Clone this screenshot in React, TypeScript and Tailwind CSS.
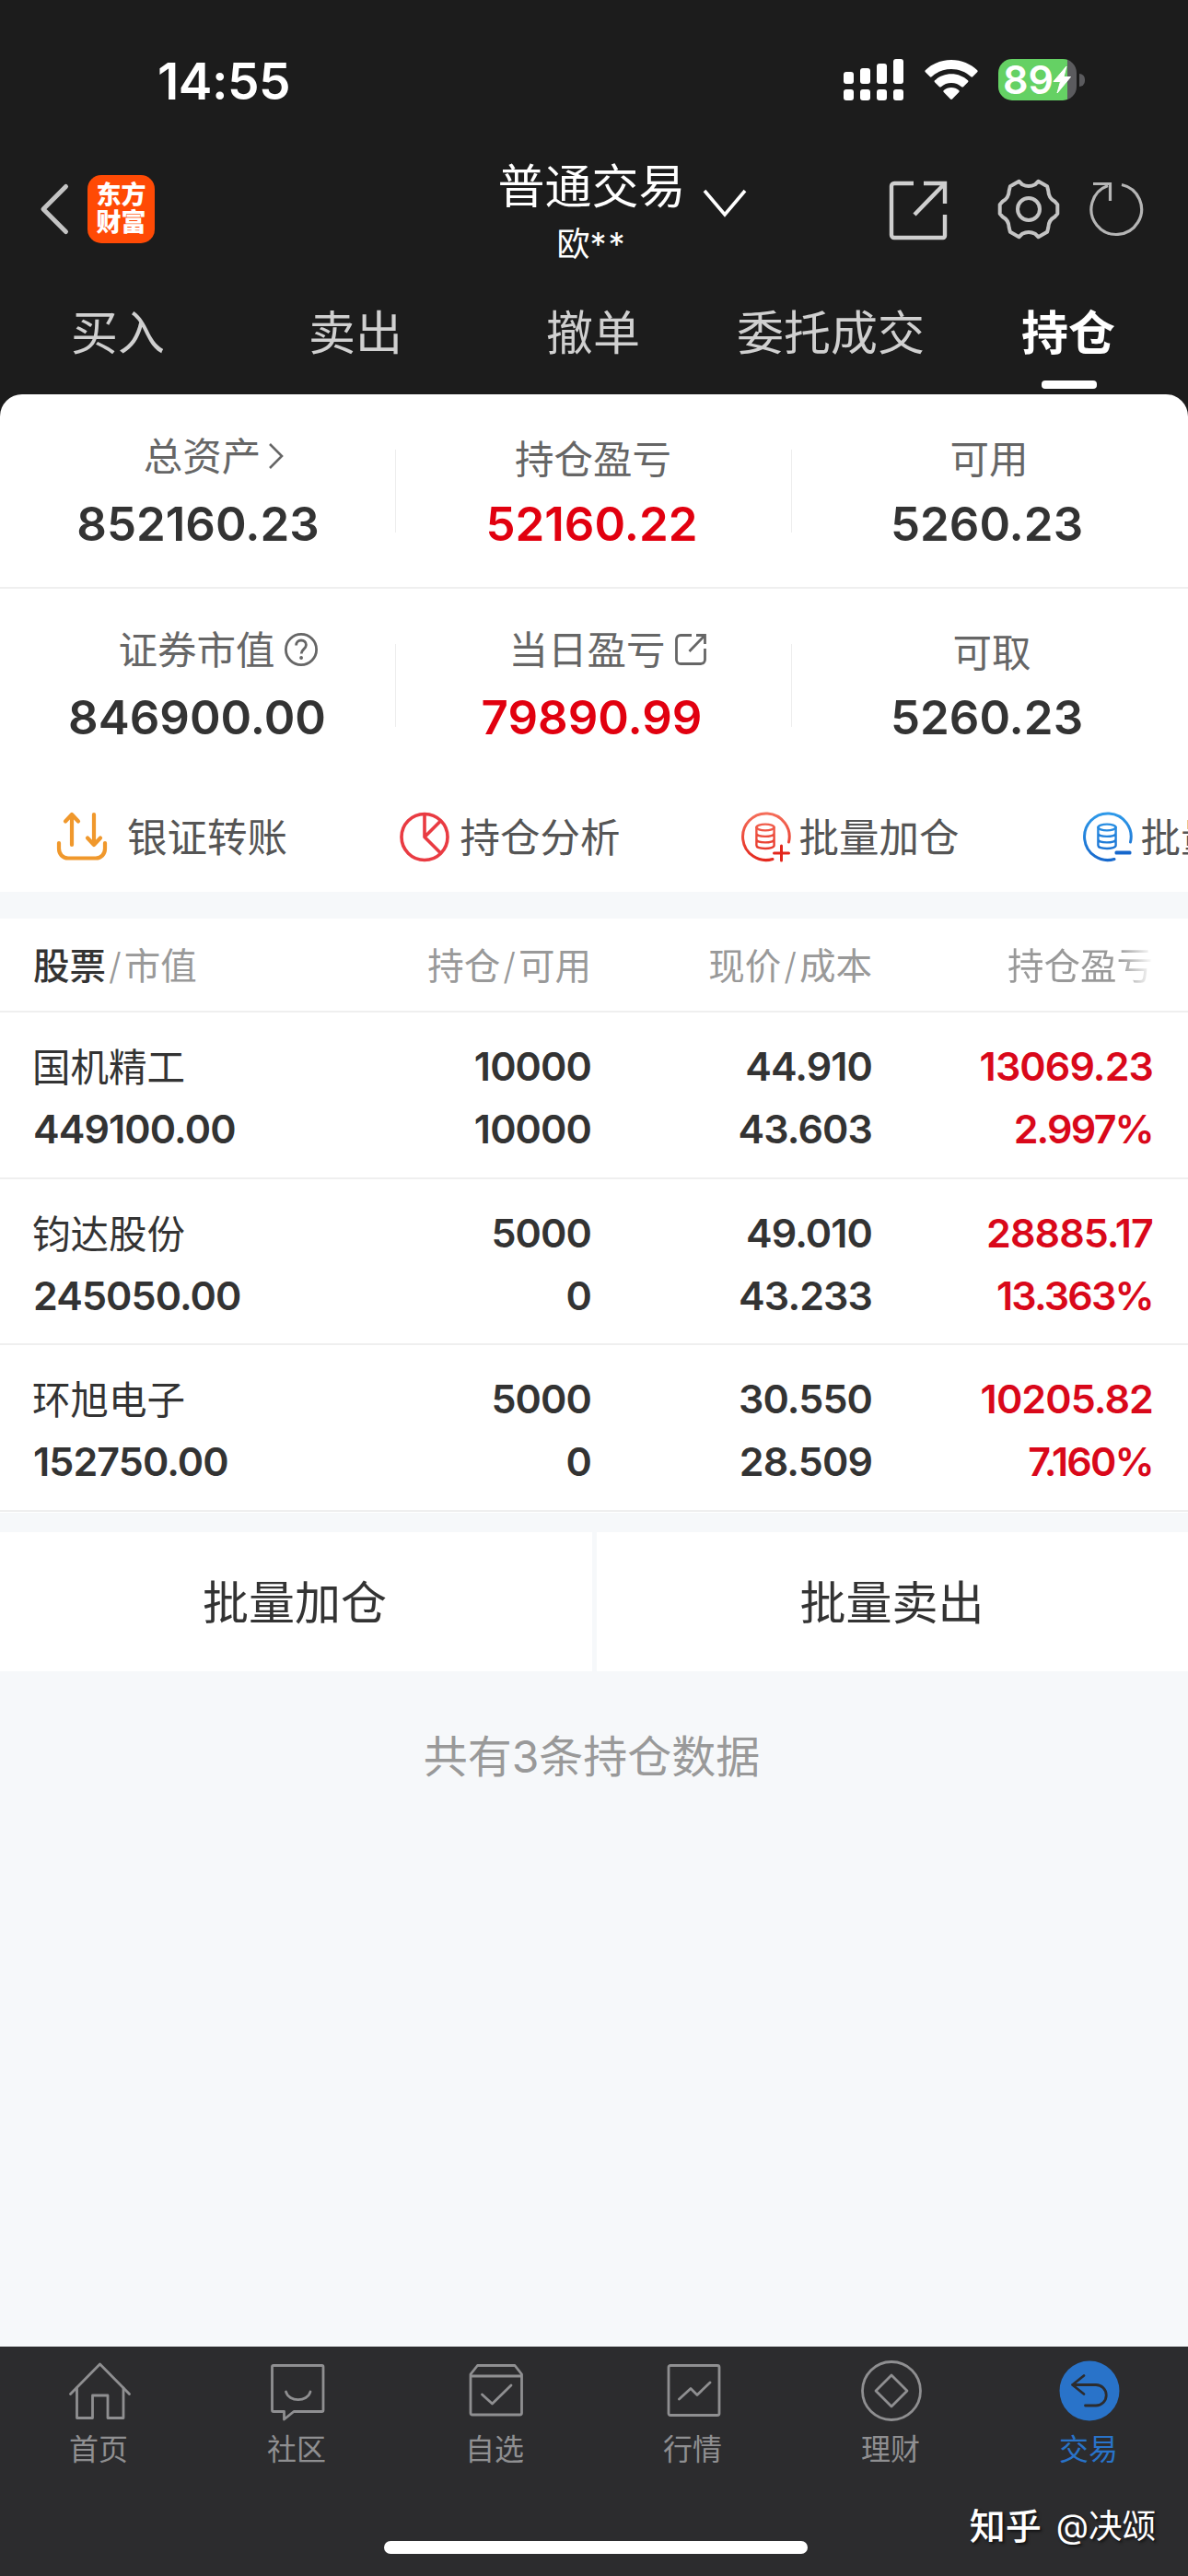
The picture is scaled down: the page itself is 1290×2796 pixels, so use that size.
import type { ReactNode } from "react";
import clsx from "clsx";

type Stat = {
  label: string;
  value: string;
  up?: boolean;
  icon?: ReactNode;
  labelClass?: string;
  valueClass?: string;
};

const ChevronRight = () => (
  <svg width="17" height="30" viewBox="0 0 17 30" fill="none" stroke="#666" strokeWidth="2.6" className="ml-2 mt-[7px]">
    <path d="M2 2 15 15 2 28" />
  </svg>
);

const HelpIcon = () => (
  <svg width="38" height="38" viewBox="0 0 38 38" fill="none" stroke="#666" strokeWidth="2.8" className="ml-[9px] mt-[3px]">
    <circle cx="19" cy="19" r="16.6" />
    <path d="M13.6 14.6c0-3.4 2.3-5.6 5.4-5.6s5.4 2 5.4 5c0 4.6-5.2 4.6-5.2 9.4" />
    <circle cx="19.1" cy="28" r="1.9" fill="#666" stroke="none" />
  </svg>
);

const OpenIcon = () => (
  <svg width="36" height="36" viewBox="0 0 36 36" fill="none" stroke="#666" strokeWidth="2.8" className="ml-[9px] mt-1">
    <path d="M19 2.5H7A4.5 4.5 0 0 0 2.5 7v22A4.5 4.5 0 0 0 7 33.5h22a4.5 4.5 0 0 0 4.5-4.5V17" />
    <path d="M24 2.5h9.5V12M33.5 2.5 16.5 20" />
  </svg>
);

const statRows: Stat[][] = [
  [
    { label: "总资产", value: "852160.23", icon: <ChevronRight />, labelClass: "pt-[45px] pl-[34px]", valueClass: "pt-px" },
    { label: "持仓盈亏", value: "52160.22", up: true, labelClass: "pt-12 pr-0.5", valueClass: "pt-px pr-[5px]" },
    { label: "可用", value: "5260.23", labelClass: "pt-12 pr-0.5", valueClass: "pt-px pr-[7px]" },
  ],
  [
    { label: "证券市值", value: "846900.00", icon: <HelpIcon />, labelClass: "pt-11 pl-[44px]", valueClass: "pr-0.5" },
    { label: "当日盈亏", value: "79890.99", up: true, icon: <OpenIcon />, labelClass: "pt-11 pl-[30px]", valueClass: "pr-[5px]" },
    { label: "可取", value: "5260.23", labelClass: "pt-[47px] pl-1", valueClass: "pr-[7px]" },
  ],
];

const tabs = ["买入", "卖出", "撤单", "委托成交", "持仓"];

const holdings = [
  { name: "国机精工", worth: "449100.00", total: "10000", usable: "10000", price: "44.910", cost: "43.603", profit: "13069.23", rate: "2.997%" },
  { name: "钧达股份", worth: "245050.00", total: "5000", usable: "0", price: "49.010", cost: "43.233", profit: "28885.17", rate: "13.363%" },
  { name: "环旭电子", worth: "152750.00", total: "5000", usable: "0", price: "30.550", cost: "28.509", profit: "10205.82", rate: "7.160%" },
];

function StatusBar() {
  return (
    <div className="flex h-[176px] items-center pl-[171px]">
      <span className="w-[745px] text-[55px] leading-[60px] font-semibold tracking-[-0.5px]">14:55</span>
      <svg width="66" height="46" viewBox="0 0 66 46" fill="#fff" className="-mt-0.5">
        <rect x="0" y="14" width="11" height="13" rx="3" />
        <rect x="18" y="10" width="11" height="17" rx="3" />
        <rect x="36" y="5" width="11" height="22" rx="3" />
        <rect x="54" y="0" width="11" height="27" rx="3" />
        <rect x="0" y="33" width="11" height="12" rx="3" />
        <rect x="18" y="33" width="11" height="12" rx="3" />
        <rect x="36" y="33" width="11" height="12" rx="3" />
        <rect x="54" y="33" width="11" height="12" rx="3" />
      </svg>
      <svg width="58" height="44" viewBox="0 0 58 44" className="-mt-0.5 ml-[22px]" fill="#fff">
        <path d="M29 0C18 0 8 4.3.8 11.3c-.6.6-.6 1.4 0 2l5 5c.5.5 1.3.5 1.9 0C13.3 13 20.800 10 29 10s15.700 3 21.300 8.300c.6.5 1.400.5 1.900 0l5-5c.6-.6.6-1.400 0-2C50 4.300 40 0 29 0Z" />
        <path d="M29 15.300c-7 0-13.300 2.700-18 7-.6.6-.6 1.400 0 2l5 4.900c.5.5 1.300.5 1.900 0 3-2.600 6.900-4.200 11.100-4.200s8.100 1.600 11.100 4.200c.6.5 1.400.5 1.900 0l5-4.900c.6-.6.6-1.400 0-2-4.700-4.300-11-7-18-7Z" />
        <path d="M29 30c-3.200 0-6 1.200-8.200 3.100-.6.5-.6 1.300-.1 1.900l7.300 7.600c.6.6 1.400.6 2 0l7.300-7.600c.5-.6.5-1.400-.1-1.900C35 31.200 32.200 30 29 30Z" />
      </svg>
      <div className="-mt-[3px] ml-[22px] flex h-[45px] w-[85px] items-center rounded-[15px] bg-[linear-gradient(90deg,#65d164_88%,#5b5b5e_88%)] pl-[5px]">
        <span className="text-[43px] leading-[45px] font-semibold">89</span>
        <svg width="20" height="31" viewBox="0 0 20 31" fill="#fff" stroke="#fff" strokeWidth="1" strokeLinejoin="round" className="-ml-px shrink-0">
          <path d="M15 1 1 17.5h7.500L5 30 19.500 12.500H12Z" />
        </svg>
      </div>
      <div className="-mt-[3px] ml-[3px] h-[14px] w-[6px] rounded-r-full bg-[#5b5b5e]" />
    </div>
  );
}

function TitleBar() {
  return (
    <div className="flex h-[102px] items-center">
      <div className="flex w-[540px] items-center pl-[42px]">
        <svg width="34" height="58" viewBox="0 0 34 58" fill="none" stroke="#c4c4c4" strokeWidth="5" strokeLinecap="round" strokeLinejoin="round">
          <path d="M29.5 4.5 5 29l24.5 24.5" />
        </svg>
        <div className="ml-[19px] flex h-[74px] w-[73px] flex-col items-center justify-center rounded-[15px] bg-[#ff4a05] text-[27px] leading-[30px] font-extrabold">
          <span>东方</span>
          <span>财富</span>
        </div>
      </div>
      <div className="flex w-[205px] flex-col items-center self-start whitespace-nowrap">
        <h1 className="mt-px text-[51px] leading-[52px]">普通交易</h1>
        <p className="mt-[18px] text-[36px] leading-[36px]">
          欧<span className="tracking-[2px]">**</span>
        </p>
      </div>
      <svg width="48" height="34" viewBox="0 0 48 34" fill="none" stroke="#fff" strokeWidth="3.6" className="ml-[18px] -mt-3">
        <path d="M2 3 24 29 46 3" />
      </svg>
      <svg width="65" height="65" viewBox="0 0 65 65" fill="none" stroke="#cfcfcf" strokeWidth="4.4" className="ml-[154px] mt-[3px]">
        <path d="M27 3H6a3 3 0 0 0-3 3v53a3 3 0 0 0 3 3h53a2 2 0 0 0 2-2V37" />
        <path d="M38 3h23v22M61 3 28 37" />
      </svg>
      <svg width="68" height="66" viewBox="0 0 68 66" fill="none" stroke="#c4c4c4" strokeWidth="4" strokeLinejoin="round" className="ml-[53px]">
        <path d="M23.500 2.800 27 6.200Q34 9.800 41 6.200l3.500-3.400 9.600 5.500 1.200 4.700q.3 8.200 7 11.600l3 3.400v10l-3 3.400q-6.700 3.400-7 11.600l-1.200 4.700-9.600 5.500L41 59.800Q34 56.200 27 59.800l-3.500 3.400-9.600-5.500-1.200-4.700q-.3-8.200-7-11.600L2.700 38V28l3-3.400q6.700-3.400 7-11.600l1.200-4.700Z" />
        <circle cx="34" cy="33" r="12" />
      </svg>
      <svg width="62" height="62" viewBox="0 0 62 62" fill="none" stroke="#b5b5b5" strokeWidth="3.2" className="ml-[30px]">
        <path d="M37 4.500A27.300 27.300 0 1 1 22 5.500" />
        <path d="M6 3.500h18.500V22" />
      </svg>
    </div>
  );
}

function Tabs() {
  return (
    <div className="grid h-[150px] grid-cols-5 pt-[54px]">
      {tabs.map((tab) => {
        const active = tab === "持仓";
        return (
          <div key={tab} className="flex flex-col items-center">
            <span className={clsx("pr-0.5 text-[51px] leading-[60px]", active ? "font-bold text-white" : "text-[#d0d0d0]")}>
              {tab}
            </span>
            {active && <div className="mt-[21px] h-[9px] w-[60px] rounded-[4px] bg-white" />}
          </div>
        );
      })}
    </div>
  );
}

function StatCell({ stat, last }: { stat: Stat; last: boolean }) {
  return (
    <div className="relative">
      <div className={clsx("flex h-[110px] items-start justify-center text-[42.5px] leading-[46px] text-[#666]", stat.labelClass)}>
        {stat.label}
        {stat.icon}
      </div>
      <div
        className={clsx(
          "text-center text-[51px] leading-[60px] font-semibold",
          stat.up ? "text-[#e1000f]" : "text-[#333]",
          stat.valueClass
        )}
      >
        {stat.value}
      </div>
      {!last && <div className="absolute right-0 top-[60px] h-[90px] w-px bg-[#ededed]" />}
    </div>
  );
}

// Coin stack shared by the batch buy and batch sell shortcuts
function CoinsIcon({ id, from, to, minus }: { id: string; from: string; to: string; minus?: boolean }) {
  return (
    <svg width="55" height="55" viewBox="0 0 55 55" fill="none" stroke={`url(#${id})`} strokeWidth="3" strokeLinecap="round">
      <defs>
        <linearGradient id={id} gradientUnits="userSpaceOnUse" x1="0" y1="0" x2="0" y2="55">
          <stop stopColor={from} />
          <stop offset="1" stopColor={to} />
        </linearGradient>
      </defs>
      <path d="M35 51.500A25.300 25.300 0 1 1 52.500 33" />
      <g strokeWidth="2.400">
        <ellipse cx="27" cy="17" rx="9.600" ry="3.400" />
        <path d="M17.400 17v19.500c0 4.600 19.200 4.600 19.200 0V17M17.400 23.500c0 4.500 19.200 4.500 19.200 0M17.400 30c0 4.500 19.200 4.500 19.200 0" />
      </g>
      {minus ? <rect x="35.500" y="42.500" width="18" height="4" rx="1.500" fill={to} stroke="none" /> : <path d="M36.500 45H52.500M44.500 37v16" stroke={to} />}
    </svg>
  );
}

function Shortcuts() {
  return (
    <div className="flex h-[118px] items-center overflow-hidden pl-[61px] text-[43.5px] leading-[60px] whitespace-nowrap text-[#555]">
      <div className="flex w-[371.5px] shrink-0 items-center">
        <svg width="56" height="55" viewBox="0 0 56 55" fill="none" stroke="#f0982c" strokeWidth="4.2" strokeLinecap="round" strokeLinejoin="round" className="-mt-1">
          <path d="M3 35v6c0 6 4 10.500 10 10.500h30c6 0 10-4.500 10-10.500v-6" />
          <path d="M17 37V4.500M10 11.500l7-7.500 7 7.500M41 4v33M34 29.500l7 7.500 7-7.500" />
        </svg>
        <span className="ml-[21px]">银证转账</span>
      </div>
      <div className="flex w-[371px] shrink-0 items-center">
        <svg width="56" height="55" viewBox="0 0 56 55" fill="none" stroke="#e93b42" strokeWidth="3.6" strokeLinejoin="round" className="-mt-0.5">
          <circle cx="28" cy="27.500" r="25" />
          <path d="M28 2.500v25L45.500 45M28 27.500 45.500 10" />
        </svg>
        <span className="ml-[11px]">持仓分析</span>
      </div>
      <div className="-mt-0.5 flex w-[371px] shrink-0 items-center">
        <CoinsIcon id="coins-buy" from="#f5705c" to="#e3271c" />
        <span className="ml-[9px] pt-0.5">批量加仓</span>
      </div>
      <div className="-mt-0.5 flex w-[371px] shrink-0 items-center">
        <CoinsIcon id="coins-sell" from="#2f9bea" to="#1667cc" minus />
        <span className="ml-[9px] pt-0.5">批量卖出</span>
      </div>
    </div>
  );
}

function Holdings() {
  return (
    <section className="mt-[29px] bg-white pb-px">
      <div className="grid h-[102px] grid-cols-[306px_300px_305px_305px] items-center border-b-2 border-[#efefef] pt-[3px] pl-[36px] text-right text-[39.5px] leading-[60px] text-[#999]">
        <div className="text-left">
          <span className="font-medium text-[#333]">股票</span>
          <span className="mx-[3px] font-light">/</span>市值
        </div>
        <div>
          持仓<span className="mx-[3px] font-light">/</span>可用
        </div>
        <div>
          现价<span className="mx-[3px] font-light">/</span>成本
        </div>
        <div className="bg-[linear-gradient(90deg,#999_88%,#fff_100%)] bg-clip-text text-transparent">持仓盈亏</div>
      </div>
      {holdings.map((item) => (
        <div
          key={item.name}
          className="grid h-[180.5px] grid-cols-[306px_300px_305px_305px] border-b-2 border-[#efefef] pt-6 pl-[36px] text-right text-[43px] leading-[68px] font-semibold tracking-[-0.9px] text-[#333]"
        >
          <div className="text-left">
            <div className="-ml-px h-[68px] pt-0.5 text-[41.5px] font-normal tracking-normal">{item.name}</div>
            <div>{item.worth}</div>
          </div>
          <div>
            <div>{item.total}</div>
            <div>{item.usable}</div>
          </div>
          <div>
            <div>{item.price}</div>
            <div>{item.cost}</div>
          </div>
          <div className="text-[#d9081a]">
            <div>{item.profit}</div>
            <div className="tracking-[-1.8px]">{item.rate}</div>
          </div>
        </div>
      ))}
    </section>
  );
}

const navItems = [
  {
    label: "首页",
    icon: (
      <>
        <path d="M1.500 36.500 33.500 4l32 32.500" />
        <path d="M8.500 30v32.500h17V38H42v24.500h17V30" />
      </>
    ),
  },
  {
    label: "社区",
    icon: (
      <>
        <path d="M7 5.500h52.500a1.500 1.500 0 0 1 1.500 1.500v47a1.500 1.500 0 0 1-1.500 1.500H29L18.500 64v-8.500H7A1.500 1.500 0 0 1 5.500 54V7A1.500 1.500 0 0 1 7 5.500Z" />
        <path d="M20.500 34c3 11.500 23.500 11.500 26.500 0" />
      </>
    ),
  },
  {
    label: "自选",
    icon: (
      <>
        <path d="M6 15v42a2 2 0 0 0 2 2h51.500a2 2 0 0 0 2-2V15L54 5.500H13.500ZM6 17h55.500" />
        <path d="M18.500 37 29.500 47 50 27" />
      </>
    ),
  },
  {
    label: "行情",
    icon: (
      <>
        <rect x="6" y="5.500" width="55" height="54" rx="2" />
        <path d="M17.500 42 30 30.500 37 37.500 51 24" />
      </>
    ),
  },
  {
    label: "理财",
    icon: (
      <>
        <circle cx="33" cy="33" r="31.500" />
        <path d="M33 16 50 33 33 50 16 33Z" />
      </>
    ),
  },
  {
    label: "交易",
    active: true,
    icon: (
      <>
        <circle cx="33" cy="33" r="32.500" fill="#2973c9" stroke="none" />
        <path d="M27 16.500 14.500 26.500 27 36.500M14.500 26.500H40a11 11 0 0 1 0 22.500H28.500" stroke="#2c2c2e" />
      </>
    ),
  },
];

function BottomNav() {
  return (
    <nav className="relative mt-auto flex h-[249px] flex-col bg-[#2c2c2e]">
      <div className="grid h-[211px] grid-cols-6 pt-[15px]">
        {navItems.map((item) => (
          <div key={item.label} className="flex flex-col items-center">
            <svg
              width="67"
              height="66"
              viewBox="0 0 67 66"
              fill="none"
              stroke="#8f8f91"
              strokeWidth="2.8"
              strokeLinecap="round"
              strokeLinejoin="round"
              className="ml-0.5"
            >
              {item.icon}
            </svg>
            <span className={clsx("mt-[11px] pr-px text-[32px] leading-[40px]", item.active ? "text-[#2973c9]" : "text-[#8f8f91]")}>
              {item.label}
            </span>
          </div>
        ))}
      </div>
      <div className="ml-[417px] h-[14px] w-[460px] rounded-full bg-white" />
      <div className="absolute top-[170px] right-[35px] flex items-center gap-4 text-white [text-shadow:2px_2px_3px_rgba(0,0,0,0.6)]">
        <span className="text-[39px] leading-[50px] font-medium">知乎</span>
        <span className="text-[36.5px] leading-[50px]">@决颂</span>
      </div>
    </nav>
  );
}

export default function App() {
  return (
    <main className="flex h-[2796px] w-[1290px] flex-col overflow-hidden bg-[#f6f8fa] font-[Inter,'Noto_Sans_CJK_SC',sans-serif]">
      <header className="bg-[#1c1c1c] text-white">
        <StatusBar />
        <TitleBar />
        <Tabs />
      </header>

      <div className="bg-[#1c1c1c]">
        <section className="h-[540px] rounded-t-[24px] bg-white">
          {statRows.map((row, i) => (
            <div key={i} className={clsx("grid h-[211px] grid-cols-3", i === 0 && "border-b-2 border-[#efefef]")}>
              {row.map((stat, j) => (
                <StatCell key={stat.label} stat={stat} last={j === row.length - 1} />
              ))}
            </div>
          ))}
          <Shortcuts />
        </section>
      </div>

      <Holdings />

      <div className="mt-[21.5px] flex h-[151px] gap-[5px] text-[50px] leading-[60px] text-[#333]">
        <button className="w-[643px] bg-white pt-0.5 pr-[3px]">批量加仓</button>
        <button className="flex-1 bg-white pt-0.5 pr-px">批量卖出</button>
      </div>

      <p className="mt-[63px] pr-[5px] text-center text-[48px] leading-[60px] text-[#999]">共有3条持仓数据</p>

      <BottomNav />
    </main>
  );
}
